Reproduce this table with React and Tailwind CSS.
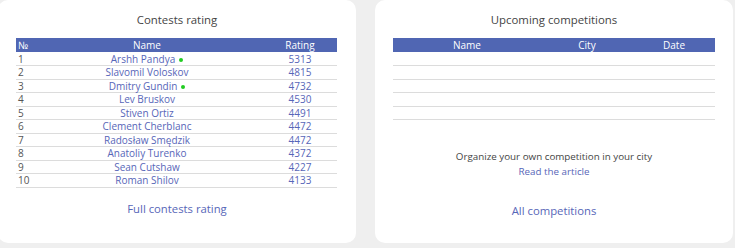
import React from 'react';

const players = [
  { name: 'Arshh Pandya', rating: 5313, online: true },
  { name: 'Slavomil Voloskov', rating: 4815 },
  { name: 'Dmitry Gundin', rating: 4732, online: true },
  { name: 'Lev Bruskov', rating: 4530 },
  { name: 'Stiven Ortiz', rating: 4491 },
  { name: 'Clement Cherblanc', rating: 4472 },
  { name: 'Radosław Smędzik', rating: 4472 },
  { name: 'Anatoliy Turenko', rating: 4372 },
  { name: 'Sean Cutshaw', rating: 4227 },
  { name: 'Roman Shilov', rating: 4133 },
];

function Card({ title, children }) {
  return (
    <div className="bg-white rounded-[10px] h-[243px] flex flex-col">
      <h2 className="text-center text-[11.4px] text-[#444] pt-[12px] h-[38px] leading-[16px]">{title}</h2>
      {children}
    </div>
  );
}

export default function App() {
  return (
    <div className="w-[735px] h-[248px] bg-[#efefef] overflow-hidden" style={{ fontFamily: '"Open Sans", sans-serif' }}>
      <div className="grid grid-cols-[358px_358px] gap-[19px] ml-[-2px]">
        <Card title="Contests rating">
          <div className="px-[18px]">
            <table className="w-[321px] text-[10px] leading-[12px] border-collapse">
              <thead>
                <tr className="bg-[#5066b3] text-white h-[14px]">
                  <th className="w-[15px] text-left font-normal pl-[2px]">№</th>
                  <th className="font-normal">Name</th>
                  <th className="w-[74px] font-normal">Rating</th>
                </tr>
              </thead>
              <tbody>
                {players.map((p, i) => (
                  <tr key={p.name} className="h-[13.5px] border-b border-[#dcdcdc]">
                    <td className="text-[#555] pl-[2px]">{i + 1}</td>
                    <td className="text-center text-[#5766b8]">
                      {p.name}
                      {p.online && <span className="inline-block w-[4px] h-[4px] rounded-full bg-[#22cc22] ml-[4px] align-middle" />}
                    </td>
                    <td className="text-center text-[#5766b8]">{p.rating}</td>
                  </tr>
                ))}
              </tbody>
            </table>
          </div>
          <a className="block text-center text-[11.3px] text-[#5766b8] mt-[13px]">Full contests rating</a>
        </Card>
        <Card title="Upcoming competitions">
          <div className="px-[18px]">
            <table className="w-[322px] text-[10px] leading-[12px] border-collapse">
              <thead>
                <tr className="bg-[#5066b3] text-white h-[14px]">
                  <th className="w-[148px] font-normal">Name</th>
                  <th className="w-[92px] font-normal">City</th>
                  <th className="font-normal">Date</th>
                </tr>
              </thead>
              <tbody>
                {[0, 1, 2, 3, 4].map((i) => (
                  <tr key={i} className="h-[13.5px] border-b border-[#dcdcdc]">
                    <td></td>
                    <td></td>
                    <td></td>
                  </tr>
                ))}
              </tbody>
            </table>
          </div>
          <p className="text-center text-[9.8px] text-[#444] mt-[30px] leading-[14px]">Organize your own competition in your city</p>
          <a className="block text-center text-[9.8px] text-[#5766b8] leading-[14px] mt-[1px]">Read the article</a>
          <a className="block text-center text-[11.3px] text-[#5766b8] mt-[24px]">All competitions</a>
        </Card>
      </div>
    </div>
  );
}
